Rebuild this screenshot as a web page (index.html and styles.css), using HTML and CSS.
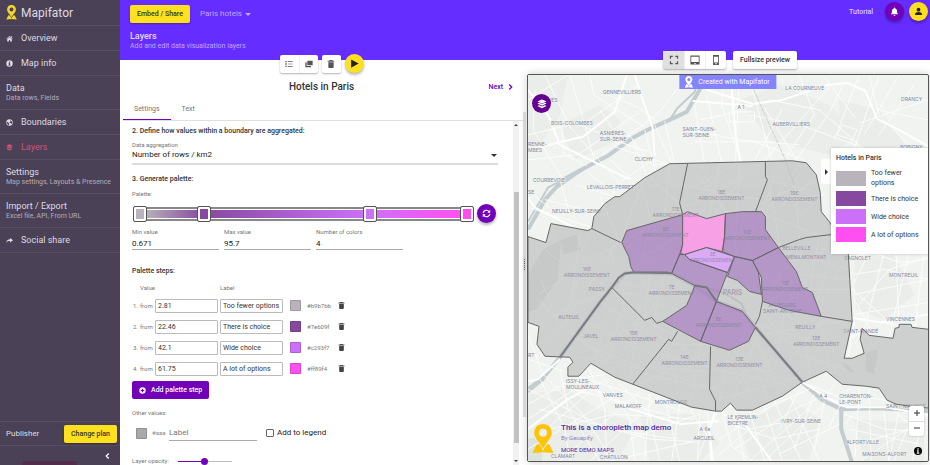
FILE: index.html
```html
<!DOCTYPE html>
<html lang="en">

<head>
    <meta charset="UTF-8">
    <meta name="viewport" content="width=device-width, initial-scale=1.0">
    <title>Mapifator - Layers</title>
    <link rel="stylesheet" href="styles.css">
</head>

<body>
    <!-- Shared icons -->
    <svg class="defs" aria-hidden="true">
        <symbol id="pin" viewBox="0 0 24 34">
            <path fill-rule="evenodd" d="M12 0C6 0 2 4.500 2 10c0 6 6 10 10 18 4-8 10-12 10-18C22 4.500 18 0 12 0zm0 5.500a4.500 4.500 0 1 1 0 9 4.500 4.500 0 0 1 0-9z" />
            <path d="M5 23h2c2 2 4 4 5 8 1-4 3-6 5-8h2l5 10-12-1-12 1z" />
        </symbol>
        <symbol id="layers" viewBox="0 0 24 24">
            <path d="M12 1l11 5-11 5L1 6zM1 11l4-2 7 3 7-3 4 2-11 5zM1 17l4-2 7 3 7-3 4 2-11 5z" />
        </symbol>
        <symbol id="trash" viewBox="0 0 24 24">
            <path d="M4 21c0 1.500 1 3 3 3h10c2 0 3-1.500 3-3V7H4v14zM22 2h-5l-1-2H8L7 2H2v3h20V2z" />
        </symbol>
    </svg>

    <div class="app">
        <nav class="sidebar">
            <a class="brand" href="#"><svg class="brand-pin"><use href="#pin" /></svg>Mapifator</a>
            <a class="item" href="#">
                <svg viewBox="0 0 24 24"><path d="M12 3L1 13l1.500 1.500L12 6l9.500 8.500L23 13l-3-3V4h-3v3zM12 8l-8 7v7h6v-5h4v5h6v-7z" /></svg>
                Overview
            </a>
            <a class="item" href="#">
                <svg viewBox="0 0 24 24"><path fill-rule="evenodd" d="M12 1a11 11 0 1 0 0 22 11 11 0 0 0 0-22zm-2 4h4v4h-4zm-1 5h5v6h2v3H8v-3h2v-3H9z" /></svg>
                Map info
            </a>
            <a class="item double" href="#">Data<small>Data rows, Fields</small></a>
            <a class="item" href="#">
                <svg viewBox="0 0 24 24"><path fill-rule="evenodd" d="M12 1a11 11 0 1 0 0 22 11 11 0 0 0 0-22zM4 9l6 5 1 7c-5-1-8-5-8-9zM13 4c5 0 8 4 8 8l-2 6-3-4-4-1 1-3 3-2z" /></svg>
                Boundaries
            </a>
            <a class="item active" href="#"><svg><use href="#layers" /></svg>Layers</a>
            <a class="item double" href="#">Settings<small>Map settings, Layouts &amp; Presence</small></a>
            <a class="item double" href="#">Import / Export<small>Excel file, API, From URL</small></a>
            <a class="item" href="#">
                <svg viewBox="0 0 24 24"><path d="M14 3l10 8-10 8v-5C8 14 4 15 1 20c0-8 5-12 13-12z" /></svg>
                Social share
            </a>
            <div class="plan">
                <span>Publisher</span>
                <button class="yellow-button">Change plan</button>
            </div>
            <button class="collapse" aria-label="Collapse menu">
                <svg viewBox="0 0 8 12"><path d="M6 2L2 6l4 4" /></svg>
            </button>
            <div class="pill"></div>
        </nav>

        <div class="page">
            <header>
                <div class="header-left">
                    <div class="project">
                        <button class="yellow-button">Embed / Share</button>
                        <button class="project-name">Paris hotels <i class="caret"></i></button>
                    </div>
                    <h1>Layers</h1>
                    <p>Add and edit data visualization layers</p>
                </div>
                <div class="header-right">
                    <a href="#">Tutorial</a>
                    <button class="round violet" aria-label="Notifications">
                        <svg viewBox="0 0 24 24"><path d="M12 23c2 0 3-1 3-2H9c0 1 1 2 3 2zm7-7v-5c0-3-2-6-5-7V3c0-1-1-2-2-2s-2 1-2 2v1c-3 1-5 4-5 7v5l-2 2v1h18v-1z" /></svg>
                    </button>
                    <button class="round yellow" aria-label="Account">
                        <svg viewBox="0 0 24 24"><circle cx="12" cy="7" r="5" /><path d="M12 13c-4 0-9 2-9 5v3h18v-3c0-3-5-5-9-5z" /></svg>
                    </button>
                </div>
            </header>

            <main>
                <section class="editor">
                    <div class="toolbar">
                        <div class="group">
                            <button aria-label="List"><svg viewBox="0 0 24 24"><path d="M1 3h4v4H1zM8 4h15v2H8zM1 10h4v4H1zM8 11h15v2H8zM1 17h4v4H1zM8 18h15v2H8z" /></svg></button>
                            <button aria-label="Duplicate"><svg viewBox="0 0 24 24"><path d="M7 2h16v14H7zM1 7h4v11h13v4H1z" /></svg></button>
                        </div>
                        <div class="group">
                            <button aria-label="Delete"><svg><use href="#trash" /></svg></button>
                        </div>
                        <button class="round yellow" aria-label="Run"><svg viewBox="0 0 24 24"><path d="M3 1l20 11L3 23z" /></svg></button>
                    </div>
                    <div class="title-row">
                        <h2>Hotels in Paris</h2>
                        <button class="next">Next <svg viewBox="0 0 8 12"><path d="M2 2l4 4-4 4" /></svg></button>
                    </div>
                    <div class="tabs" role="tablist">
                        <button class="tab selected" role="tab" aria-selected="true">Settings</button>
                        <button class="tab" role="tab">Text</button>
                    </div>

                    <div class="scroll-area">
                        <form class="settings">
                            <h3>2. Define how values within a boundary are aggregated:</h3>
                            <div class="field wide">
                                <label for="aggregation">Data aggregation</label>
                                <div class="select">
                                    <select id="aggregation">
                                        <option>Number of rows / km2</option>
                                    </select>
                                    <i class="caret"></i>
                                </div>
                            </div>

                            <h3>3. Generate palette:</h3>
                            <div class="small-label">Palette:</div>
                            <div class="palette">
                                <div class="gradient">
                                    <button type="button" class="handle gray" style="left: 1%" aria-label="Color 1"></button>
                                    <button type="button" class="handle purple" style="left: 20%" aria-label="Color 2"></button>
                                    <button type="button" class="handle lilac" style="left: 70%" aria-label="Color 3"></button>
                                    <button type="button" class="handle pink" style="left: 99%" aria-label="Color 4"></button>
                                </div>
                                <button type="button" class="round violet" aria-label="Refresh palette">
                                    <svg class="refresh" viewBox="0 0 24 24"><path d="M3 11c1-8 11-10 16-4M21 13c-1 8-11 10-16 4" /><path class="solid" d="M22 2v8h-8zM2 22v-8h8z" /></svg>
                                </button>
                            </div>
                            <div class="values">
                                <div class="field">
                                    <label for="min">Min value</label>
                                    <input id="min" type="text" value="0.671">
                                </div>
                                <div class="field">
                                    <label for="max">Max value</label>
                                    <input id="max" type="text" value="95.7">
                                </div>
                                <div class="field">
                                    <label for="count">Number of colors</label>
                                    <input id="count" type="text" value="4">
                                </div>
                            </div>

                            <h3>Palette steps:</h3>
                            <table>
                                <tr>
                                    <th class="col-number"></th>
                                    <th class="col-from">Value</th>
                                    <th class="col-input"></th>
                                    <th class="col-input">Label</th>
                                    <th class="col-swatch"></th>
                                    <th class="col-hex"></th>
                                    <th></th>
                                </tr>
                                <tr>
                                    <td>1.</td>
                                    <td>from</td>
                                    <td><input type="text" value="2.81" aria-label="Value 1"></td>
                                    <td><input type="text" value="Too fewer options" aria-label="Label 1"></td>
                                    <td><span class="swatch gray"></span></td>
                                    <td>#b9b7bb</td>
                                    <td><button type="button" class="delete" aria-label="Delete step 1"><svg><use href="#trash" /></svg></button></td>
                                </tr>
                                <tr>
                                    <td>2.</td>
                                    <td>from</td>
                                    <td><input type="text" value="22.46" aria-label="Value 2"></td>
                                    <td><input type="text" value="There is choice" aria-label="Label 2"></td>
                                    <td><span class="swatch purple"></span></td>
                                    <td>#7e609f</td>
                                    <td><button type="button" class="delete" aria-label="Delete step 2"><svg><use href="#trash" /></svg></button></td>
                                </tr>
                                <tr>
                                    <td>3.</td>
                                    <td>from</td>
                                    <td><input type="text" value="42.1" aria-label="Value 3"></td>
                                    <td><input type="text" value="Wide choice" aria-label="Label 3"></td>
                                    <td><span class="swatch lilac"></span></td>
                                    <td>#c293f7</td>
                                    <td><button type="button" class="delete" aria-label="Delete step 3"><svg><use href="#trash" /></svg></button></td>
                                </tr>
                                <tr>
                                    <td>4.</td>
                                    <td>from</td>
                                    <td><input type="text" value="61.75" aria-label="Value 4"></td>
                                    <td><input type="text" value="A lot of options" aria-label="Label 4"></td>
                                    <td><span class="swatch pink"></span></td>
                                    <td>#ff89f4</td>
                                    <td><button type="button" class="delete" aria-label="Delete step 4"><svg><use href="#trash" /></svg></button></td>
                                </tr>
                            </table>
                            <button type="button" class="add-step">
                                <svg viewBox="0 0 24 24"><path fill-rule="evenodd" d="M12 1a11 11 0 1 0 0 22 11 11 0 0 0 0-22zm-2 5h4v4h4v4h-4v4h-4v-4H6v-4h4z" /></svg>
                                Add palette step
                            </button>

                            <div class="small-label">Other values:</div>
                            <div class="other">
                                <span class="swatch other-gray"></span>
                                <span class="hex">#aaa</span>
                                <input type="text" placeholder="Label" aria-label="Other values label">
                                <label class="legend-check"><input type="checkbox">Add to legend</label>
                            </div>
                            <div class="opacity">
                                <label for="opacity">Layer opacity:</label>
                                <input id="opacity" type="range" min="0" max="100" value="50">
                            </div>
                        </form>
                        <div class="scrollbar">
                            <i class="arrow up"></i>
                            <div class="thumb"></div>
                            <i class="arrow down"></i>
                        </div>
                    </div>
                </section>

                <div class="splitter"><span></span></div>

                <section class="preview">
                    <div class="toolbar">
                        <div class="group">
                            <button class="pressed" aria-label="Fit"><svg viewBox="0 0 24 24"><path d="M2 9V2h7v3H5v4zM15 2h7v7h-3V5h-4zM2 15h3v4h4v3H2zM19 15h3v7h-7v-3h4z" /></svg></button>
                            <button aria-label="Tablet"><svg viewBox="0 0 24 24"><path fill-rule="evenodd" d="M1 1h22v22H1zm2 3v13h18V4zm7 15v2h4v-2z" /></svg></button>
                            <button aria-label="Phone"><svg viewBox="0 0 24 24"><path fill-rule="evenodd" d="M5 0h14v24H5zm2 4v14h10V4zm3 16v2h4v-2z" /></svg></button>
                        </div>
                        <button class="fullsize">Fullsize preview</button>
                    </div>
                    <div class="map">
                        <svg class="canvas" viewBox="528 75 401 387" preserveAspectRatio="xMidYMid slice">
                            <!-- Parks and built-up areas -->
                            <g class="areas">
                                <path d="M528 75h40l-8 40-20 30-12 5zM560 125l40-20 20 15-5 22-40 18zM740 100l40-15 50 20 30 30-30 20-60-15zM840 100l40 10 30 40-30 10-40-30zM855 260l40-5 20 40-30 25-28-10zM528 395l40-5 30 20 40 15-20 37h-90zM640 415l60 0 20 30-20 17h-50zM740 425l50-25 30 20-10 40h-60zM855 420l70 5v37h-60z" />
                                <path class="park" d="M528 275l15-25 18-10-3 40-22 30-8 3zM561 240l15-5 5 15-18 5zM867 353l12-3-4 25-9-3zM528 440l14-3v25h-14zM840 362l8 3 9 9-8-2z" />
                            </g>
                            <!-- Rivers -->
                            <g class="river">
                                <path d="M528 230l17-30 18-20 24-13 21-11 25-18 19-10 18-8 17-8 13-22 6-15" />
                                <path class="thin" d="M528 222l20-34 40-22M670 120l8-12 17-16 5-17M550 193l36-25" />
                                <path d="M633 273l-8 1-13 14-12 15-40 55-18 22-14 10" />
                                <path d="M633 273l39 1 23 12 22 16 26 10 13 16 47 55 20 18 19 9v20l11 34" />
                                <path d="M842 410l35-1 53 3" />
                                <path class="thin" d="M707 288l18 6 17 10 4 10M555 363l-12 18-15 12" />
                            </g>
                            <!-- Local streets -->
                            <g class="streets">
                                <path d="M528 100l40-25M545 75l25 52 50 57M528 135l60-14 50-35M528 160l50-5 60-42M540 110l22 18 2 26 23 12M570 75l12 40 13 48M590 75l4 20 50 32M535 90l-2 40 30 50M600 110l22 33 30 10M580 125l60 25M608 95l30 12 20 15M610 160l22 20M575 185l40 12M590 175l30 22M545 200l60 15M560 180l10 35M632 138l15 38M645 130l12 45M655 125l20 45M665 121l10 43M602 155l55-40 20-25M615 147l54 18M618 184l40-27M628 133l24 32 15-1M530 193l20 15M528 208l65 20" />
                                <path d="M695 105l10 58M707 95l15 67M725 75l-3 30 20 57M740 75l-4 87M752 85l20 75M765 108l37 60M783 109l-28 52M800 75l15 40-30 45M826 78l30 40M830 87l-64 73M845 83l-15 30-35 50M860 75l-25 65M880 75l-25 75M900 75l-35 60M915 85l-35 50M929 100l-68 23M929 120l-52-10M870 75l10 40 30 30M700 120l40-8M690 130l50 10 60 5M750 115l50 10 70 25M770 100l50 10 40 35M695 142l60 0 50 18M730 112h25v10h-25zM843 125l15 5-5 10-15-5z" />
                                <path d="M855 275l30-5 45 10M853 260l20-7 28 10 29-4M855 295l75-15M860 305l30-35 39-12M870 253l-15 30M885 253l-22 85M897 255l3 70M910 253l-20 85M925 255l-9 72M855 315l75-12M853 290l40 35M855 300l20 36M850 335l15 2M855 322l-6 35M858 320l73 10M848 340l18-8" />
                                <path d="M528 335l15 40 40 40 30 47M528 360l60 20 45 15 50 17M528 405l45-25 35-5M528 420l60-38M535 440l70-60M528 450l100-60M560 462l80-70M590 462l70-65M540 380l25 50 5 32M560 370l8 40 32 52M590 370l15 40 2 52M605 380l25 40 5 42M620 385l30 30 10 47M650 395l-5 67M665 400l15 62M680 405l-8 57M528 390l80 40 70 10M540 410l110 30 50 3M550 430l65-15 80 5M610 462l85-20M630 440l70-25M570 390l45 10 65 20M700 415l-2 47M708 412l3 50M716 412l-18 48M690 410l20 30" />
                                <path d="M722 412l10 35 20 15M735 411l10 51M750 412l15 50M765 407l18 55M775 402l27 60M790 395l30 67M730 425l45 15 45-10M720 440l55-35 35-15M735 450l60-40 22-10M750 462l60-53M765 462l60-57M780 455l60-30M720 455l30-25 40-8M800 390l-20 40M815 395l-20 55M825 402l-10 50M808 385l20 8 30 12M835 385l-10 15M850 388l-20 40M860 388l-4 70M870 388l2 74M875 395l-30 30M845 415l40 15 44 3M850 430l70 15M856 445l73-20M862 462l65-45M885 412l5 50M900 412l-10 50M915 412l-20 50M925 418l-12 44M850 395l35 6 20 20 25 15" />
                            </g>
                            <!-- Main roads -->
                            <g class="roads">
                                <path d="M528 90l20 25 12 30 70 35M635 75l8 25 10 28 2 28M528 150l55-13 32-25 12-37M693 75l15 15 45 14 30-4 45-15 20-2 18 8 12 28 20 10 32 18M693 101l60 5M731 75l5 60 5 27M855 258l20-8 55-20M851 318l30 5 49-8M803 383l24 15 20 10 40 0 43 8M716 412l-6 18 3 32M722 415l20 5 30 42" />
                                <path d="M528 198l7 10 40 20M528 430l40-30 23-12 40 22 50 15 38-3M560 360l-22 20-10 2" />
                            </g>
                            <!-- Streets inside the city -->
                            <g class="streets city">
                                <path d="M592 229l28 14 30 12 33-20 43-50 40-23M620 243l60-30M620 243l-20-46M620 243l25-65M620 243l60 30 60 15 60 35M610 250l20 60M621 243l-35 20-20 50M590 235l-20 40-32 20M545 250l30 25 30 10M570 300l35-30M560 330l60-90M640 180l10 35 33 30M650 178l40 35M670 165l-5 50M690 165l40 50 10 50M690 190l50-28M700 162l25 50M720 162l-10 55M740 162l-5 100M755 162l-45 60M690 205l70-35M680 185l80 15M686 225l70 40 70 55M690 245l50-30 50-25M780 162l-20 60M800 165l-35 50M815 180l-50 40M766 180l60 15M766 200l60-5M765 215l80 30M780 245l-10-60M800 240l-5-60M795 205l10-8 8 8-10 10zM800 190l20-10" />
                                <path d="M780 250l70 20M790 262l60-10M797 275l55 5M803 290l50 0M820 235l-10 60M835 240l-18 65M848 255l-28 55M770 305l60-60M763 302l88 25M757 325l92 28M760 310l40 45 45 15M765 335l85-15M775 345l60-28M790 360l35-40M800 375l40-55M810 375l-5-60M785 310l-5 40M820 318l10 50M742 312l40 80M749 342l50 35M730 351l-10 50M735 350l20 60M748 345l22 60M716 370l70 15M712 390l60-30M720 400l80-22M760 330l-30 80M745 360l45 30M720 360l60 15" />
                                <path d="M701 342l-10 65M680 335l20 65 16 8M672 345l45 0M660 355l55 15M650 368l65 5M645 375l70 15M640 385l75-35M665 350l20 52M655 370l60 20M612 288l50 80M600 303l70 40M585 322l70 35M575 340l70 30M565 355l80 15M590 360l75-60M600 365l60-40M620 375l40-80M630 380l10-75M645 321l30 15M610 310l-15 50M625 300l-18 66M575 338l35 25M640 275l20 45M650 275l-5 45M665 275l-10 43M672 275l20 30M620 283l65 15M618 290l65 22M635 310l50-30M628 250l95 50M640 230l40 35M650 225l-10 48M665 220l-15 53M630 265l50-30M695 215l20 60M710 220l-20 50M685 230l40 15M685 245l40-20M735 257l-5 45M745 260l5 35M755 225l-10 35M770 260l30 50M765 275l50 30M785 265l-18 38M538 300l30 30 40 30M540 325l35-20 40-15M545 345l40-40M541 280l20 50M580 235l-10 80" />
                            </g>
                            <path class="rail" d="M752 85l34 75 9 25M760 75l-20-5" />
                            <!-- Map labels under the layer -->
                            <g class="labels">
                                <text x="603" y="94">GENNEVILLIERS</text>
                                <text x="537" y="102">GENNES</text>
                                <text x="551" y="125">BOIS-COLOMBES</text>
                                <text x="600" y="135">ASNIÈRES-</text>
                                <text x="600" y="141">SUR-SEINE</text>
                                <text x="528" y="146">RENNE-</text>
                                <text x="528" y="152">MBES</text>
                                <text x="635" y="161">CLICHY</text>
                                <text x="683" y="131">SAINT-OUEN-</text>
                                <text x="683" y="137">SUR-SEINE</text>
                                <text x="533" y="182">COURBEVOIE</text>
                                <text x="587" y="189">LEVALLOIS-PERRET</text>
                                <text x="528" y="194">SE</text>
                                <text x="552" y="213">NEUILLY-SUR-SEINE</text>
                                <text x="786" y="90">LA COURNEUVE</text>
                                <text x="902" y="101">DRANCY</text>
                                <text x="773" y="126">AUBERVILLIERS</text>
                                <text x="738" y="109">A 1</text>
                                <text x="901" y="149">BOBIGNY</text>
                                <text x="845" y="260">BAGNOLET</text>
                                <text x="890" y="278">MONTREUIL</text>
                                <text x="887" y="322">VINCENNES</text>
                                <text x="844" y="334">SAINT-MANDÉ</text>
                                <text x="566" y="384">ISSY-LES-</text>
                                <text x="566" y="390">MOULINEAUX</text>
                                <text x="603" y="398">VANVES</text>
                                <text x="615" y="409">MALAKOFF</text>
                                <text x="655" y="405">MONTROUGE</text>
                                <text x="700" y="432">A 6a</text>
                                <text x="694" y="441">ARCUEIL</text>
                                <text x="728" y="420">LE KREMLIN-</text>
                                <text x="728" y="426">BICÊTRE</text>
                                <text x="782" y="424">IVRY-SUR-SEINE</text>
                                <text x="820" y="399">A 4</text>
                                <text x="840" y="399">CHARENTON-</text>
                                <text x="840" y="405">LE-PONT</text>
                                <text x="887" y="409">SAINT-MAURICE</text>
                                <text x="847" y="445">ALFORTVILLE</text>
                                <text x="863" y="457">MAISONS-ALFORT</text>
                                <text x="551" y="459">CLAMART</text>
                                <text x="600" y="460">CHÂTILLON</text>
                                <text x="528" y="358">RT</text>
                            </g>
                            <!-- Districts -->
                            <path class="district d1" d="M528 237l18 6 5-19 37 7 4-2 2-12 11-13 10-7h5l25-19 25-14 123-3 14 2 10 12 4 18 1 19 8 10 19 31 4 69-8 37h8l12-5-4-14 2-11 7 7 24 3 2-10 4-1v-3h12l1 3 17 2v79l-13-1-20-3-9-4-8-12-13-2-24-2-16-13-24 11-20 14-30 14h-16l-6-7-9 8h-6l-24-4-59-23-18-7-24-14-12 13h-11v-9l5-5-3-5-25-1-8-12 2-18-11-4z" />
                            <path class="district d2" d="M683 215l-56 16-5 12 7 14 2 10 3 6 38 1 8-19 3-10z" />
                            <path class="district d4" d="M683 215l5-3 19 7 19-5-1 23-2 15-16-4-22 7-4-1 2-9z" />
                            <path class="district d3" d="M685 255l22-7 28 9-7 16-38-13z" />
                            <path class="district d2" d="M726 214l17-2h19l4 5v13l13 18-26 13-18-4-12-5 2-15z" />
                            <path class="district d2" d="M779 248l18 24 6 16 10 5 9 24-32-6-27-9-1-24-9-17z" />
                            <path class="district d2" d="M735 257l18 4 6 12 3 22-12-3-12-11-10-4z" />
                            <path class="district d2" d="M680 255h5l5 5 38 13-11 29-10-14-12-2-23-12z" />
                            <path class="district d2" d="M695 286l12 2 10 14-16 40-38-20 24-16 6-14z" />
                            <path class="district d2" d="M717 302l26 10 13 16-7 14-19 9-29-9z" />
                            <path class="border" d="M592 229l29 14M688 164l-8 39 3 12M766 162v15l2 3-12 32M779 248l21-8 7-2 25-3M822 317l31 5M612 288l33 33 7-3 5 6 6-2M678 332l-6 10-3-2-36 45M711 347l-1 43 6 12v10M763 302l-3 15-4 8" />
                            <path class="border thick" d="M672 274l-5-1h-34l-8 1-6 4-7 10-12 15-40 55M756 328l47 55M695 286l12 2 10 14" />
                            <g class="labels inner">
                                <text x="676" y="211">17E</text>
                                <text x="676" y="217">ARRONDISSEMENT</text>
                                <text x="722" y="194">18E</text>
                                <text x="722" y="200">ARRONDISSEMENT</text>
                                <text x="795" y="195">19E</text>
                                <text x="795" y="201">ARRONDISSEMENT</text>
                                <text x="666" y="231">8E</text>
                                <text x="666" y="237">ARRONDISSEMENT</text>
                                <text x="748" y="234">10E</text>
                                <text x="748" y="240">ARRONDISSEMENT</text>
                                <text x="713" y="256">2E</text>
                                <text x="713" y="262">ARRONDISSEMENT</text>
                                <text x="587" y="272">16E</text>
                                <text x="587" y="278">ARRONDISSEMENT</text>
                                <text x="597" y="292">PASSY</text>
                                <text x="672" y="290">7E</text>
                                <text x="672" y="296">ARRONDISSEMENT</text>
                                <text x="786" y="286">11E</text>
                                <text x="786" y="292">ARRONDISSEMENT</text>
                                <text x="797" y="250">BELLEVILLE</text>
                                <text x="807" y="259">MÉNILMONTANT</text>
                                <text class="city-name" x="733" y="296">PARIS</text>
                                <text x="783" y="308">FAUBOURG</text>
                                <text x="783" y="314">SAINT-ANTOINE</text>
                                <text x="569" y="320">AUTEUIL</text>
                                <text x="591" y="339">JAVEL</text>
                                <text x="634" y="336">15E</text>
                                <text x="634" y="342">ARRONDISSEMENT</text>
                                <text x="719" y="322">5E</text>
                                <text x="719" y="328">ARRONDISSEMENT</text>
                                <text x="806" y="330">REUILLY</text>
                                <text x="817" y="341">12E</text>
                                <text x="817" y="347">ARRONDISSEMENT</text>
                                <text x="685" y="360">14E</text>
                                <text x="685" y="366">ARRONDISSEMENT</text>
                                <text x="740" y="362">13E</text>
                                <text x="740" y="368">ARRONDISSEMENT</text>
                            </g>
                        </svg>

                        <button class="round violet layers-button" aria-label="Layers"><svg><use href="#layers" /></svg></button>
                        <a class="created" href="#"><svg><use href="#pin" /></svg>Created with Mapifator</a>
                        <button class="legend-toggle" aria-label="Hide legend"><i></i></button>
                        <div class="legend">
                            <h4>Hotels in Paris</h4>
                            <ul>
                                <li><span class="gray"></span>Too fewer options</li>
                                <li><span class="purple"></span>There is choice</li>
                                <li><span class="lilac"></span>Wide choice</li>
                                <li><span class="pink"></span>A lot of options</li>
                            </ul>
                        </div>
                        <div class="about">
                            <svg><use href="#pin" /></svg>
                            <div>
                                <h4>This is a choropleth map demo</h4>
                                <p>By Geoapify</p>
                                <a href="#">MORE DEMO MAPS</a>
                            </div>
                        </div>
                        <div class="zoom">
                            <button aria-label="Zoom in"><svg viewBox="0 0 8 8"><path d="M1 4h6M4 1v6" /></svg></button>
                            <button aria-label="Zoom out"><svg viewBox="0 0 8 8"><path d="M1 4h6" /></svg></button>
                        </div>
                        <button class="attribution" aria-label="Attribution">
                            <svg viewBox="0 0 24 24"><path fill-rule="evenodd" d="M12 0a12 12 0 1 0 0 24 12 12 0 0 0 0-24zm-2 4h4v4h-4zm-1 6h5v7h2v3H8v-3h2v-4H9z" /></svg>
                        </button>
                    </div>
                </section>
            </main>
        </div>
    </div>
</body>

</html>
```
FILE: styles.css
```css
* {
    box-sizing: border-box;
}

body {
    margin: 0;
    font-family: Roboto, "Liberation Sans", sans-serif;
    font-size: 7px;
    line-height: 10px;
    color: #333;
    background-color: #fff;
}

h1,
h2,
h3,
h4,
p,
ul {
    margin: 0;
    padding: 0;
    font-size: 7px;
    font-weight: 500;
}

button,
input,
select {
    font: inherit;
    color: inherit;
    border: none;
    background: none;
    margin: 0;
    padding: 0;
}

button {
    cursor: pointer;
}

a {
    color: inherit;
    text-decoration: none;
}

svg {
    fill: currentColor;
    flex: none;
}

.defs {
    display: none;
}

.app {
    display: flex;
    height: 100vh;
    overflow: hidden;
}

/* Colors of the palette */
.gray {
    background-color: #b9b3bb;
}

.purple {
    background-color: #86499f;
}

.lilac {
    background-color: #cd70f8;
}

.pink {
    background-color: #ff4ff0;
}

.caret {
    border: 3px solid transparent;
    border-top-color: currentColor;
    border-bottom: none;
}

/* Sidebar */
.sidebar {
    width: 120px;
    flex: none;
    display: flex;
    flex-direction: column;
    background-color: #4a4156;
    color: #dedbe2;
    font-size: 9px;
}

.brand {
    height: 26px;
    flex: none;
    display: flex;
    align-items: center;
    gap: 4px;
    padding-left: 6px;
    font-size: 12px;
    border-bottom: 1px solid #574e63;
}

.brand-pin {
    width: 11px;
    height: 15px;
    color: #f3d52b;
}

.item {
    height: 25px;
    flex: none;
    display: flex;
    align-items: center;
    gap: 8px;
    padding-left: 6px;
    border-bottom: 1px solid #574e63;
}

.item svg {
    width: 7px;
    height: 7px;
}

.item.double {
    height: 34px;
    flex-direction: column;
    align-items: flex-start;
    justify-content: center;
    gap: 0;
}

.item small {
    font-size: 7px;
    color: #b3adbb;
}

.item.active {
    color: #d2527c;
}

.yellow-button {
    height: 18px;
    padding: 0 7px;
    border-radius: 2px;
    background-color: #ffe01f;
    color: #3b3420;
    font-size: 7px;
    font-weight: 500;
    box-shadow: 0 1px 2px rgba(0, 0, 0, 0.3);
}

.plan {
    margin-top: auto;
    height: 25px;
    display: flex;
    align-items: center;
    justify-content: space-between;
    padding: 0 3px 0 6px;
    font-size: 8px;
    border-top: 1px solid #574e63;
    border-bottom: 1px solid #574e63;
}

.collapse {
    height: 15px;
    padding: 5px 10px 0 0;
    text-align: right;
    line-height: 8px;
}

.collapse svg {
    width: 5px;
    height: 8px;
    fill: none;
    stroke: #fff;
    stroke-width: 2;
}

.pill {
    width: 55px;
    height: 4px;
    margin-left: 22px;
    border-radius: 3px 3px 0 0;
    background-color: #512f4c;
}

/* Header */
.page {
    flex: 1;
    min-width: 0;
    display: flex;
    flex-direction: column;
}

header {
    height: 60px;
    flex: none;
    display: flex;
    justify-content: space-between;
    padding: 5px 2px 0 10px;
    background-color: #652dff;
    color: #d9ccff;
}

.project {
    display: flex;
    gap: 10px;
    margin-bottom: 8px;
}

.project-name {
    display: flex;
    align-items: center;
    gap: 3px;
    font-size: 8px;
    color: #bfa8ff;
}

.project-name .caret {
    border-width: 3px;
    border-bottom: none;
}

header h1 {
    font-size: 9px;
    color: #e4daff;
}

header p {
    font-weight: 400;
    color: #bfa8ff;
}

.header-right {
    display: flex;
    align-items: center;
    align-self: flex-start;
    height: 13px;
    gap: 5px;
}

.header-right a {
    margin-right: 7px;
    font-weight: 500;
}

.round {
    width: 19px;
    height: 19px;
    flex: none;
    display: flex;
    align-items: center;
    justify-content: center;
    border-radius: 50%;
    box-shadow: 0 2px 3px rgba(0, 0, 0, 0.3);
}

.round svg {
    width: 9px;
    height: 9px;
}

.violet {
    background-color: #7100b8;
    color: #fff;
}

.yellow {
    background-color: #ffe01f;
    color: #222;
}

/* Editor and preview columns overlap the header with their toolbars */
main {
    flex: 1;
    min-height: 0;
    display: flex;
    margin-top: -9px;
}

.toolbar {
    display: flex;
    justify-content: center;
    align-items: center;
    gap: 4px;
}

.group {
    display: flex;
    height: 18px;
    border-radius: 2px;
    background-color: #fff;
    box-shadow: 0 1px 2px rgba(0, 0, 0, 0.3);
}

.group button {
    width: 19px;
    display: flex;
    align-items: center;
    justify-content: center;
    color: #555;
}

.group button + button {
    border-left: 1px solid #eee;
}

.group svg {
    width: 8px;
    height: 8px;
}

.editor {
    flex: 404;
    min-width: 0;
    display: flex;
    flex-direction: column;
    padding-top: 3px;
}

.editor .toolbar {
    height: 19px;
}

.title-row {
    display: grid;
    grid-template-columns: 1fr auto 1fr;
    align-items: center;
    height: 28px;
}

.title-row h2 {
    grid-column: 2;
    font-size: 10px;
}

.next {
    justify-self: end;
    display: flex;
    align-items: center;
    gap: 5px;
    margin-right: 10px;
    font-weight: 500;
    color: #7100b8;
}

.next svg {
    width: 5px;
    height: 8px;
    fill: none;
    stroke: currentColor;
    stroke-width: 2;
}

.tabs {
    display: flex;
    height: 20px;
    margin-left: 3px;
    border-bottom: 1px solid #e0e0e0;
}

.tab {
    padding: 0 11px 3px;
    color: #777;
}

.tab.selected {
    border-bottom: 1px solid #7100b8;
}

.scroll-area {
    flex: 1;
    min-height: 0;
    display: flex;
    overflow: hidden;
}

.settings {
    flex: 1;
    padding: 5px 15px 0 12px;
}

.small-label,
.field label,
.opacity label {
    display: block;
    font-size: 6px;
    color: #777;
}

.field input {
    display: block;
    width: 100%;
    height: 13px;
    font-size: 8px;
    color: #222;
    border-bottom: 1px solid #aaa;
}

.wide {
    margin: 4px 0 9px;
}

.select {
    display: flex;
    align-items: center;
    height: 15px;
    padding-bottom: 3px;
    border-bottom: 2px solid #ddd;
}

.select select {
    flex: 1;
    appearance: none;
    font-size: 8px;
    color: #222;
}

.select .caret {
    border-width: 3px;
    border-bottom: none;
    margin-right: 1px;
}

.palette {
    display: flex;
    align-items: center;
    gap: 5px;
    padding: 0 2px 0 3px;
    margin: 5px 0 4px;
}

h3 + .small-label {
    margin-top: 5px;
}

.gradient {
    position: relative;
    flex: 1;
    height: 14px;
    border: 2px solid #888;
    box-shadow: inset 0 0 0 1px #fff;
    background: linear-gradient(90deg, #b9b3bb 2%, #86499f 20%, #cd70f8 69%, #ff4ff0 98%);
}

.handle {
    position: absolute;
    top: -3px;
    width: 14px;
    height: 16px;
    margin-left: -7px;
    border: 1px solid #555;
    border-radius: 2px;
    box-shadow: inset 0 0 0 2px #fff;
}

.refresh path {
    fill: none;
    stroke: #fff;
    stroke-width: 3;
}

.refresh .solid {
    fill: #fff;
    stroke: none;
}

.values {
    display: grid;
    grid-template-columns: repeat(3, 87px);
    gap: 5px;
    margin-bottom: 16px;
}

table {
    table-layout: fixed;
    border-collapse: collapse;
    width: 220px;
    margin-top: 7px;
    font-size: 6px;
    color: #777;
}

th,
td {
    height: 21px;
    padding: 0;
    text-align: left;
    font-weight: 400;
}

th {
    height: 12px;
    padding-bottom: 2px;
}

.col-number {
    width: 8px;
}

.col-from {
    width: 15px;
}

.col-input {
    width: 65px;
}

.col-swatch {
    width: 22px;
}

.col-hex {
    width: 28px;
}

td:first-child {
    padding-left: 1px;
}

td input {
    display: block;
    width: 63px;
    height: 14px;
    padding: 0 2px;
    font-size: 7px;
    color: #333;
    border: 1px solid #bbb;
    border-radius: 1px;
}

.swatch {
    display: block;
    width: 11px;
    height: 11px;
    border: 1px solid rgba(0, 0, 0, 0.15);
    border-radius: 1px;
}

td .swatch {
    margin-left: 5px;
}

.other-gray {
    background-color: #aaa;
}

.delete {
    display: block;
    width: 8px;
    height: 8px;
    margin-left: 3px;
    color: #444;
}

.delete svg {
    display: block;
    width: 7px;
    height: 7px;
}

.add-step {
    display: flex;
    align-items: center;
    gap: 5px;
    height: 18px;
    padding: 0 7px;
    margin: 2px 0 9px;
    border-radius: 2px;
    background-color: #7100b8;
    color: #fff;
    font-weight: 500;
}

.add-step svg {
    width: 7px;
    height: 7px;
}

.other {
    display: flex;
    align-items: center;
    height: 16px;
    margin: 7px 0 15px 4px;
}

.other .hex {
    width: 22px;
    padding-left: 5px;
    font-size: 6px;
    color: #888;
}

.other > input {
    width: 88px;
    height: 15px;
    font-size: 8px;
    border-bottom: 1px solid #aaa;
}

.legend-check {
    display: flex;
    align-items: center;
    gap: 3px;
    margin-left: 9px;
    font-size: 8px;
    color: #222;
}

.legend-check input {
    appearance: none;
    width: 8px;
    height: 8px;
    border: 1px solid #666;
    border-radius: 1px;
}

.opacity {
    display: flex;
    align-items: center;
    gap: 9px;
}

.opacity input {
    appearance: none;
    width: 54px;
    height: 1px;
    background: linear-gradient(90deg, #7100b8 50%, #bbb 50%);
}

.opacity input::-webkit-slider-thumb {
    appearance: none;
    width: 7px;
    height: 7px;
    border-radius: 50%;
    background-color: #7100b8;
}

.scrollbar {
    width: 6px;
    margin-right: 4px;
    display: flex;
    flex-direction: column;
    align-items: center;
    padding: 3px 0;
    background-color: #f1f1f1;
}

.thumb {
    order: 2;
    flex: 250;
    width: 5px;
    background-color: #c1c1c1;
}

.scrollbar::before {
    content: "";
    order: 1;
    flex: 66;
}

.scrollbar::after {
    content: "";
    order: 3;
    flex: 17;
}

.arrow {
    border: 2px solid transparent;
}

.arrow.up {
    border-bottom-color: #444;
    border-top: none;
}

.arrow.down {
    order: 4;
    border-top-color: #444;
    border-bottom: none;
}

.splitter {
    width: 3px;
    margin: 61px 0 48px;
    display: flex;
    align-items: center;
    justify-content: center;
    background-color: #e2e2e2;
}

.splitter span {
    height: 11px;
    border-left: 1px dotted #666;
}

/* Map preview */
.preview {
    flex: 403;
    min-width: 0;
    display: flex;
    flex-direction: column;
    padding: 0 1px 3px;
}

.preview .toolbar {
    gap: 7px;
    height: 18px;
    margin-bottom: 5px;
    padding-left: 4px;
}

.preview .group button {
    width: 21px;
}

.preview .group button.pressed {
    background-color: #e0e0e0;
}

.preview .group svg {
    width: 10px;
    height: 10px;
}

.fullsize {
    height: 18px;
    padding: 0 7px;
    border-radius: 2px;
    background-color: #fff;
    font-weight: 500;
    box-shadow: 0 1px 2px rgba(0, 0, 0, 0.3);
}

.map {
    position: relative;
    flex: 1;
    min-height: 0;
    overflow: hidden;
    border: 1px solid #555;
    border-radius: 2px;
    background-color: #f1f3f0;
    box-shadow: 0 0 8px rgba(0, 0, 0, 0.2);
}

.canvas {
    position: absolute;
    width: 100%;
    height: 100%;
}

.canvas path {
    fill: none;
    stroke-linejoin: round;
}

.areas path {
    fill: #eaedea;
}

.areas .park {
    fill: #dde3df;
}

.river path {
    stroke: #c3cdd0;
    stroke-width: 4;
}

.river .thin {
    stroke-width: 2;
}

.streets {
    stroke: #fff;
    stroke-width: 1;
    opacity: 0.8;
}

.roads {
    stroke: #fff;
    stroke-width: 2;
}

.rail {
    stroke: #ccd0d0;
    stroke-dasharray: 4 1;
}

.labels {
    font-family: Inter, "Liberation Sans", sans-serif;
    font-size: 5px;
    fill: #8089a0;
    stroke: #f1f3f0;
    stroke-width: 1;
    paint-order: stroke;
}

.inner {
    fill: #85839a;
    stroke: none;
    opacity: 0.8;
    text-anchor: middle;
}

.city-name {
    font-size: 7px;
}

.canvas .district {
    stroke: #666;
    stroke-width: 1;
}

.canvas .d1 {
    fill: rgba(184, 183, 185, 0.6);
}

.canvas .d2 {
    fill: rgba(153, 95, 190, 0.5);
}

.canvas .d3 {
    fill: rgba(222, 160, 255, 0.8);
}

.canvas .d4 {
    fill: rgba(255, 152, 234, 0.85);
}

.border {
    stroke: #666;
}

.border.thick {
    stroke: #777b80;
    stroke-width: 2;
}

.layers-button {
    position: absolute;
    top: 19px;
    left: 4px;
    box-shadow: none;
    background-color: #660090;
}

.layers-button svg {
    width: 10px;
    height: 10px;
}

.created {
    position: absolute;
    top: 0;
    left: 50%;
    transform: translateX(-50%);
    display: flex;
    align-items: center;
    gap: 5px;
    height: 14px;
    padding: 0 7px 0 5px;
    background-color: #8484ff;
    color: #fff;
    white-space: nowrap;
}

.created svg {
    width: 9px;
    height: 12px;
}

.legend {
    position: absolute;
    top: 73px;
    right: -1px;
    width: 98px;
    padding: 5px;
    background-color: #fff;
    box-shadow: 0 0 3px rgba(0, 0, 0, 0.2);
}

.legend h4 {
    margin-bottom: 5px;
}

.legend ul {
    display: grid;
    gap: 3px;
    padding-bottom: 7px;
    font-weight: 400;
    list-style: none;
}

.legend li {
    display: flex;
    align-items: center;
    gap: 5px;
    min-height: 15px;
}

.legend li:first-child {
    padding-right: 10px;
}

.legend span {
    width: 30px;
    height: 15px;
    flex: none;
}

.legend-toggle {
    position: absolute;
    top: 84px;
    right: 97px;
    width: 10px;
    height: 25px;
    display: flex;
    align-items: center;
    justify-content: center;
    background-color: #fff;
    border-radius: 2px 0 0 2px;
}

.legend-toggle i {
    border: 3px solid transparent;
    border-left-color: #333;
    border-right: none;
}

.about {
    position: absolute;
    left: 4px;
    bottom: 6px;
    display: flex;
    align-items: center;
    gap: 7px;
    color: #4b2aa0;
}

.about svg {
    width: 22px;
    height: 30px;
    color: #ffc400;
}

.about h4 {
    font-size: 8px;
}

.about p {
    font-size: 6px;
    font-weight: 400;
    color: #8c7fc0;
    margin-bottom: 2px;
}

.about a {
    display: block;
    font-size: 6px;
}

.zoom {
    position: absolute;
    right: 4px;
    bottom: 25px;
    display: grid;
    border-radius: 2px;
    background-color: #fff;
    box-shadow: 0 0 2px rgba(0, 0, 0, 0.3);
}

.zoom button {
    width: 15px;
    height: 15px;
    line-height: 8px;
}

.zoom button + button {
    border-top: 1px solid #ddd;
}

.zoom svg {
    width: 8px;
    height: 8px;
    stroke: #333;
}

.attribution {
    position: absolute;
    right: 6px;
    bottom: 6px;
    width: 8px;
    height: 8px;
    color: #000;
}

.attribution svg {
    display: block;
    width: 8px;
    height: 8px;
}
```
